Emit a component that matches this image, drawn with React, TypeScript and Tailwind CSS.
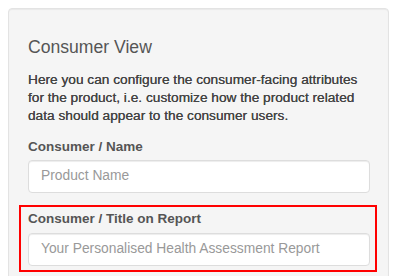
export default function App() {
  return (
    <div className="h-[276px] w-[398px] overflow-hidden bg-white pl-2 pr-[9px] pt-2 font-['Liberation_Sans',Arial,sans-serif]">
      <div className="h-[300px] rounded border border-[#e3e3e3] bg-[#f5f5f5] pl-[19px] pr-[18px] pt-[28px] shadow-[inset_0_1px_1px_rgba(0,0,0,0.05)]">
        <h2 className="text-[17.6px] leading-[20px] text-[#555]">Consumer View</h2>
        <p className="mt-[14px] text-[13.7px] leading-[18px] text-[#444] [text-shadow:0_0_0.4px_#444]">
          Here you can configure the consumer-facing attributes for the product, i.e. customize how the product related
          data should appear to the consumer users.
        </p>
        <div className="mt-[13px]">
          <label className="block text-[13.5px] font-bold leading-[18px] text-[#555]">Consumer / Name</label>
          <div className="mt-[4px] flex h-[33px] items-center rounded border border-[#ddd] bg-white px-3 text-[13.8px] text-[#999] shadow-[inset_0_1px_1px_rgba(0,0,0,0.075)]">
            Product Name
          </div>
        </div>
        <div className="-ml-[9px] -mr-[7px] mt-[12px] border-2 border-[#ff0000] pb-[4px] pl-[7px] pr-[5px] pt-[3px]">
          <label className="block text-[13.5px] font-bold leading-[18px] text-[#555]">Consumer / Title on Report</label>
          <div className="mt-[5px] flex h-[33px] items-center rounded border border-[#ddd] bg-white px-3 text-[13.8px] text-[#999] shadow-[inset_0_1px_1px_rgba(0,0,0,0.075)]">
            Your Personalised Health Assessment Report
          </div>
        </div>
      </div>
    </div>
  );
}
